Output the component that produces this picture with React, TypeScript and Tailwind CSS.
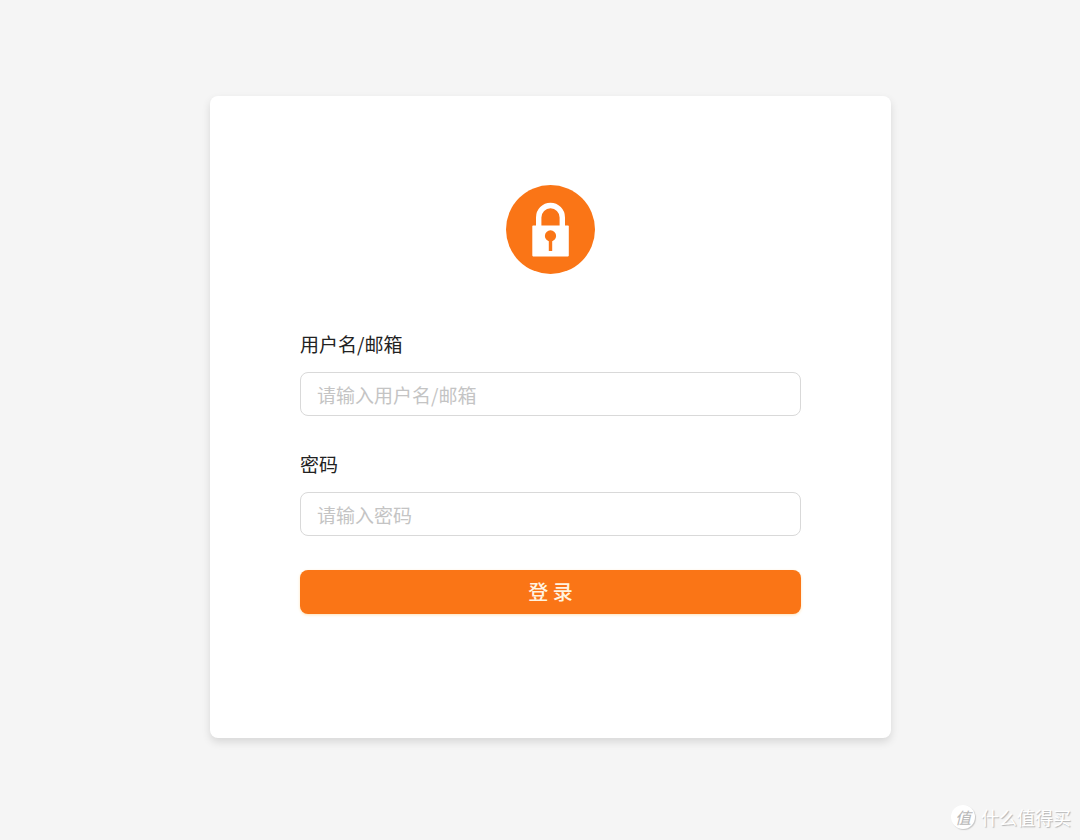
import { useState } from "react";
import type { FormEvent } from "react";

type LoginField = {
  name: "account" | "password";
  type: string;
  label: string;
  placeholder: string;
};

const fields: LoginField[] = [
  {
    name: "account",
    type: "text",
    label: "用户名/邮箱",
    placeholder: "请输入用户名/邮箱",
  },
  {
    name: "password",
    type: "password",
    label: "密码",
    placeholder: "请输入密码",
  },
];

const LockLogo = () => (
  <svg viewBox="0 0 89 89" className="mx-auto size-[89px]" aria-hidden="true">
    <circle cx="44.5" cy="44.5" r="44.5" fill="#fa7516" />
    <path
      d="M32.7 42V32.5a11.8 12 0 0 1 23.6 0V42"
      fill="none"
      stroke="#fff"
      strokeWidth="5.4"
    />
    <rect x="26.3" y="40.6" width="36.5" height="30.8" rx="0.8" fill="#fff" />
    <circle cx="44.5" cy="50.9" r="5.6" fill="#fa7516" />
    <rect x="42.8" y="54" width="3.4" height="12" fill="#fa7516" />
  </svg>
);

const LoginForm = () => {
  const [values, setValues] = useState({ account: "", password: "" });

  const onSubmit = (event: FormEvent) => {
    event.preventDefault();
  };

  return (
    <form onSubmit={onSubmit} className="mt-14">
      <div className="flex flex-col gap-[34px]">
        {fields.map((field) => (
          <div key={field.name}>
            <label
              htmlFor={field.name}
              className="mb-3.5 block text-[19px] leading-7 text-[#222]"
            >
              {field.label}
            </label>
            <input
              id={field.name}
              name={field.name}
              type={field.type}
              value={values[field.name]}
              placeholder={field.placeholder}
              onChange={(event) =>
                setValues({ ...values, [field.name]: event.target.value })
              }
              className="block h-11 w-full rounded-lg border border-[#d9d9d9] bg-white px-4 text-[19px] text-[#222] outline-none placeholder:text-[#c4c4c4] focus:border-[#fa7516]"
            />
          </div>
        ))}
      </div>
      <button
        type="submit"
        className="mt-[34px] flex h-11 w-full cursor-pointer items-center justify-center rounded-lg bg-[#fa7516] text-xl font-medium text-[#fff3e0] shadow-[0_1px_3px_#ffe3b8]"
      >
        登 录
      </button>
    </form>
  );
};

const Watermark = () => (
  <div className="absolute right-[9px] bottom-[9px] flex items-center gap-1.5 text-lg leading-7 text-white">
    <span className="flex size-6 items-center justify-center rounded-full bg-white text-base text-[#b8b8b8] italic shadow-[1px_1px_1px_#c8c8c8]">
      值
    </span>
    <span className="[text-shadow:1px_1px_1px_#b4b4b4]">什么值得买</span>
  </div>
);

const App = () => {
  return (
    <main className="relative min-h-screen bg-[#f5f5f5] pt-24 pb-24 pl-[21px] font-['Noto_Sans_CJK_SC',sans-serif]">
      <section className="mx-auto w-full max-w-[681px] rounded-lg bg-white px-[90px] pt-[89px] pb-[124px] shadow-[0_4px_8px_rgba(0,0,0,0.12)]">
        <LockLogo />
        <LoginForm />
      </section>
      <Watermark />
    </main>
  );
};

export default App;
